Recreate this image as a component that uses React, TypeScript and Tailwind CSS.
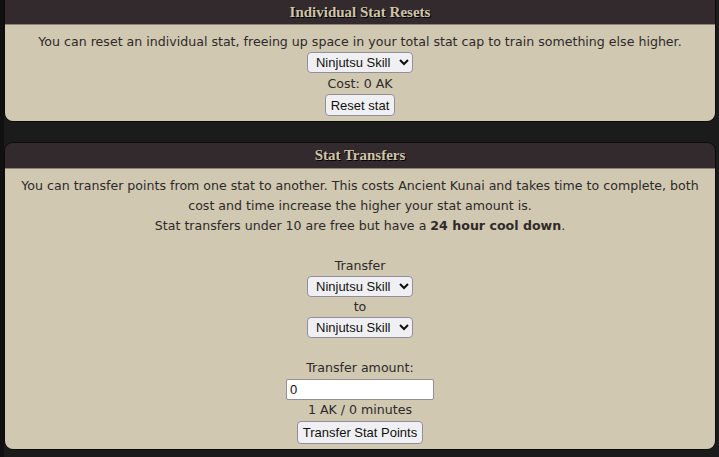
import React from "react";

const stats = ["Ninjutsu Skill", "Taijutsu Skill", "Genjutsu Skill", "Bloodline Skill", "Speed", "Cast Speed"];

function StatSelect() {
  return (
    <select
      defaultValue="Ninjutsu Skill"
      className="h-[21px] w-[106px] rounded-[4px] border border-[#8f8f9d] bg-[#f0f0f4] pl-[4px] text-[13px] leading-none text-[#101010] [font-family:'Liberation_Sans',Arial,sans-serif]"
    >
      {stats.map((s) => (
        <option key={s}>{s}</option>
      ))}
    </select>
  );
}

function Button({ children, className = "" }: { children: React.ReactNode; className?: string }) {
  return (
    <button
      className={`rounded-[4px] border border-[#8f8f9d] bg-[#f0f0f4] px-[5px] text-[13px] leading-none text-[#101010] [font-family:'Liberation_Sans',Arial,sans-serif] ${className}`}
    >
      {children}
    </button>
  );
}

function Panel({ title, first, children }: { title: string; first?: boolean; children: React.ReactNode }) {
  return (
    <section
      className={`overflow-hidden rounded-b-[9px] border border-[#0c0b0b] ${
        first ? "border-t-0" : "rounded-t-[9px]"
      }`}
    >
      <h2
        className={`flex ${
          first ? "h-[25px]" : "h-[26px]"
        } items-center justify-center border-b border-[#8c8578] bg-[#332a2e] text-[15px] font-bold text-[#cfc4a6] [font-family:'Liberation_Serif',serif] [text-shadow:1px_1px_0_#000]`}
      >
        {title}
      </h2>
      <div className="flex flex-col items-center bg-[#d0c8b1] text-center text-[12.6px] leading-[20px] text-[#2e2a2b] [font-family:'DejaVu_Sans',Verdana,sans-serif]">
        {children}
      </div>
    </section>
  );
}

export default function App() {
  return (
    <div className="min-h-[457px] w-[719px] border-l-4 border-[#111010] bg-[#1c1b1c] pr-[3px]">
      <Panel title="Individual Stat Resets" first>
        <div className="flex flex-col items-center pb-[5px] pt-[7px]">
          <p>You can reset an individual stat, freeing up space in your total stat cap to train something else higher.</p>
          <StatSelect />
          <p className="pt-[1px]">Cost: 0 AK</p>
          <Button className="h-[22px]">Reset stat</Button>
        </div>
      </Panel>

      <div className="h-[20px]" />

      <Panel title="Stat Transfers">
        <div className="flex flex-col items-center pb-[5px] pt-[7px]">
          <p>
            You can transfer points from one stat to another. This costs Ancient Kunai and takes time to complete, both
            <br />
            cost and time increase the higher your stat amount is.
            <br />
            Stat transfers under 10 are free but have a <b>24 hour cool down</b>.
          </p>
          <p>&nbsp;</p>
          <p>Transfer</p>
          <StatSelect />
          <p>to</p>
          <StatSelect />
          <p>&nbsp;</p>
          <p>Transfer amount:</p>
          <input
            type="text"
            defaultValue="0"
            className="mt-[1px] h-[21px] w-[148px] rounded-[2px] border border-[#8f8f9d] bg-white px-[3px] text-[13px] text-[#101010] [font-family:'Liberation_Sans',Arial,sans-serif]"
          />
          <p>1 AK / 0 minutes</p>
          <Button className="mt-[1px] h-[23px]">Transfer Stat Points</Button>
        </div>
      </Panel>
    </div>
  );
}
